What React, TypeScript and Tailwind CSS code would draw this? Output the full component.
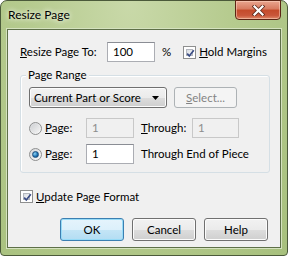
import React from "react";

const F = { fontFamily: "Lato, 'Noto Sans', sans-serif" };

function Check({ checked }: { checked?: boolean }) {
  return (
    <div className="w-[13px] h-[13px] border border-[#8e8f8f] bg-white p-[2px] shrink-0">
      <div className="w-full h-full border border-[#b3b6bd] bg-gradient-to-br from-[#d9dde3] to-[#f6f6f6] relative">
        {checked && (
          <svg viewBox="0 0 9 9" className="absolute -left-[1px] -top-[1px] w-[9px] h-[9px]">
            <path d="M1.2 4.6 L3.3 7 L7.8 1.2" fill="none" stroke="#3b4d85" strokeWidth="1.7" />
          </svg>
        )}
      </div>
    </div>
  );
}

function Radio({ checked }: { checked?: boolean }) {
  return (
    <div className="w-[13px] h-[13px] rounded-full border border-[#8e8f8f] bg-gradient-to-br from-[#d4d6d9] to-[#fbfbfb] flex items-center justify-center shrink-0">
      {checked ? (
        <div className="w-[7px] h-[7px] rounded-full bg-[radial-gradient(circle_at_35%_35%,#8fd4f5,#1a6fb0_60%,#0e3f73)] border border-[#1d4f7e]" />
      ) : (
        <div className="w-[9px] h-[9px] rounded-full bg-gradient-to-br from-[#cfd1d4] to-[#f4f4f4]" />
      )}
    </div>
  );
}

function Input({ value, disabled, w }: { value: string; disabled?: boolean; w: string }) {
  return (
    <div
      className={`${w} h-[20px] border flex items-center pl-[5px] text-[11.5px] ${
        disabled
          ? "border-[#c8c8c8] bg-[#f0f0f0] text-[#8d8d8d]"
          : "border-[#abadb3] border-t-[#8a8d94] bg-white text-black"
      }`}
    >
      {value}
    </div>
  );
}

function Btn({ label, def }: { label: string; def?: boolean }) {
  return (
    <div
      className={`w-[64px] h-[23px] rounded-[3px] border flex items-center justify-center text-black ${
        def
          ? "border-[#3c7fb1] bg-[linear-gradient(#e5f4fc_0%,#dcf0fb_50%,#c4e5f6_51%,#b3ddf3_100%)] shadow-[inset_0_0_0_1px_#97dbf7]"
          : "border-[#707070] bg-[linear-gradient(#f2f2f2_0%,#ebebeb_50%,#dddddd_51%,#cfcfcf_100%)] shadow-[inset_0_0_0_1px_#fcfcfc]"
      }`}
    >
      {label}
    </div>
  );
}

export default function App() {
  return (
    <div className="w-[288px] h-[256px] bg-white" style={F}>
      <div className="w-[288px] h-[256px] rounded-t-[7px] rounded-b-[4px] border border-[#4b5a3a] bg-[radial-gradient(ellipse_at_45%_0%,#c9d9a9_0%,#b6cb8f_45%,#a7c07d_100%)] flex flex-col relative">
        <div className="h-[28px] flex items-start relative">
          <div className="pl-[7px] pt-[5px] text-[12px] text-black [text-shadow:0_0_6px_#eef3e4,0_0_4px_#eef3e4]">
            Resize Page
          </div>
          <div className="absolute right-[6px] top-[-1px] w-[46px] h-[20px] rounded-b-[4px] border border-[#5b2414] bg-[linear-gradient(#e9a58f_0%,#d77a5f_45%,#c44a2a_50%,#c9563a_80%,#e08a6a_100%)] shadow-[inset_0_0_0_1px_rgba(255,220,200,0.5)] flex items-center justify-center">
            <svg viewBox="0 0 12 11" className="w-[13px] h-[11px]">
              <path d="M2 1.5 L10 9.5 M10 1.5 L2 9.5" stroke="#5c2a1c" strokeWidth="3.8" strokeLinecap="square" />
              <path d="M2 1.5 L10 9.5 M10 1.5 L2 9.5" stroke="#ffffff" strokeWidth="2.2" strokeLinecap="square" />
            </svg>
          </div>
        </div>
        <div className="mx-[6px] h-[219px] border border-[#5e7048] shadow-[0_0_0_1px_#d5e2bf] bg-[#f0f0f0] flex flex-col text-[11.5px] text-black">
          {/* row 1 */}
          <div className="flex items-center mt-[12px] h-[20px] pl-[12px]">
            <span className="w-[87px]">
              <span className="underline">R</span>esize Page To:
            </span>
            <Input value="100" w="w-[48px]" />
            <span className="ml-[7px]">%</span>
            <div className="ml-[12px] flex items-center">
              <Check checked />
              <span className="ml-[3px]">
                <span className="underline">H</span>old Margins
              </span>
            </div>
          </div>
          {/* group */}
          <div className="relative mt-[13px] ml-[12px] w-[250px] h-[98px] border border-[#d5dfe5] rounded-[3px] shadow-[inset_1px_1px_0_#fff]">
            <span className="absolute left-[5px] top-[-9px] px-[2px] bg-[#f0f0f0] leading-[16px]">Page Range</span>
            <div className="flex mt-[11px] ml-[8px] gap-[7px]">
              <div className="w-[138px] h-[21px] rounded-[3px] border border-[#707070] bg-[linear-gradient(#f2f2f2_0%,#ebebeb_50%,#dddddd_51%,#cfcfcf_100%)] shadow-[inset_0_0_0_1px_#fcfcfc] flex items-center pl-[4px] pr-[7px] justify-between">
                <span>Current Part or Score</span>
                <svg viewBox="0 0 7 4" className="w-[7px] h-[4px]">
                  <path d="M0 0 H7 L3.5 4 Z" fill="#000" />
                </svg>
              </div>
              <div className="w-[63px] h-[21px] rounded-[3px] border border-[#adb2b5] bg-[#f4f4f4] flex items-center justify-center text-[#838383]">
                <span>
                  <span className="underline">S</span>elect...
                </span>
              </div>
            </div>
            <div className="flex items-center mt-[10px] ml-[8px] h-[20px]">
              <Radio />
              <span className="ml-[3px] w-[41px]">
                <span className="underline">P</span>age:
              </span>
              <Input value="1" disabled w="w-[48px]" />
              <span className="ml-[7px] w-[51px]">
                <span className="underline">T</span>hrough:
              </span>
              <Input value="1" disabled w="w-[47px]" />
            </div>
            <div className="flex items-center mt-[6px] ml-[8px] h-[20px]">
              <Radio checked />
              <span className="ml-[3px] w-[41px]">
                P<span className="underline">a</span>ge:
              </span>
              <Input value="1" w="w-[48px]" />
              <span className="ml-[7px]">Through End of Piece</span>
            </div>
          </div>
          {/* update */}
          <div className="flex items-center mt-[15px] ml-[12px]">
            <Check checked />
            <span className="ml-[3px]">
              <span className="underline">U</span>pdate Page Format
            </span>
          </div>
          <div className="flex mt-[13px] ml-[52px] gap-[8px]">
            <Btn label="OK" def />
            <Btn label="Cancel" />
            <Btn label="Help" />
          </div>
        </div>
      </div>
    </div>
  );
}
